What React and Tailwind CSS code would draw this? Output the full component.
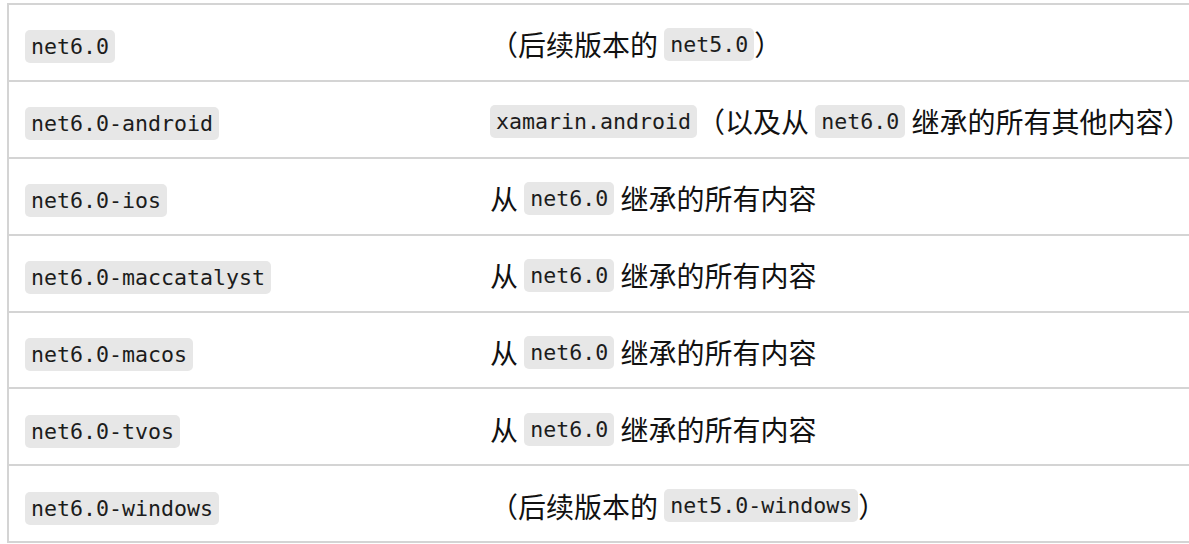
import React from 'react';

const rows = [
    { tfm: 'net6.0', desc: [['paren', '（后续版本的'], ['code', 'net5.0'], ['text', '）']] },
    { tfm: 'net6.0-android', desc: [['code', 'xamarin.android'], ['text', '（以及从 '], ['code', 'net6.0'], ['text', ' 继承的所有其他内容）']] },
    { tfm: 'net6.0-ios', desc: [['text', '从 '], ['code', 'net6.0'], ['text', ' 继承的所有内容']] },
    { tfm: 'net6.0-maccatalyst', desc: [['text', '从 '], ['code', 'net6.0'], ['text', ' 继承的所有内容']] },
    { tfm: 'net6.0-macos', desc: [['text', '从 '], ['code', 'net6.0'], ['text', ' 继承的所有内容']] },
    { tfm: 'net6.0-tvos', desc: [['text', '从 '], ['code', 'net6.0'], ['text', ' 继承的所有内容']] },
    { tfm: 'net6.0-windows', desc: [['paren', '（后续版本的'], ['code', 'net5.0-windows'], ['text', '）']] },
];

const Code = ({ children }) => (
    <code className="inline-block rounded-[5px] bg-[#e7e7e7] px-[6px] py-[3px] align-middle font-['DejaVu_Sans_Mono',monospace] text-[21.6px] leading-[27px] text-[#1c1c1c]">
        {children}
    </code>
);

const App = () => {
    return (
        <div className="h-[544px] w-[1189px] overflow-hidden bg-white font-['Noto_Sans_CJK_SC',sans-serif] text-[28px] text-[#111]">
            <div className="ml-[7px] mt-[3px] w-[1182px] border-l-2 border-t-2 border-[#d4d4d4]">
                {rows.map((row) => (
                    <div key={row.tfm} className="grid h-[76.9px] grid-cols-[465px_1fr] items-center border-b-2 border-[#d4d4d4]">
                        <div className="pl-4">
                            <Code>{row.tfm}</Code>
                        </div>
                        <div className="whitespace-nowrap pl-4 leading-[40px]">
                            {row.desc.map(([kind, value], i) =>
                                kind === 'code' ? (
                                    <Code key={i}>{value}</Code>
                                ) : kind === 'paren' ? (
                                    <span key={i} className="whitespace-pre align-middle">{value} </span>
                                ) : (
                                    <span key={i} className="whitespace-pre align-middle">{value}</span>
                                )
                            )}
                        </div>
                    </div>
                ))}
            </div>
        </div>
    );
};

export default App;
